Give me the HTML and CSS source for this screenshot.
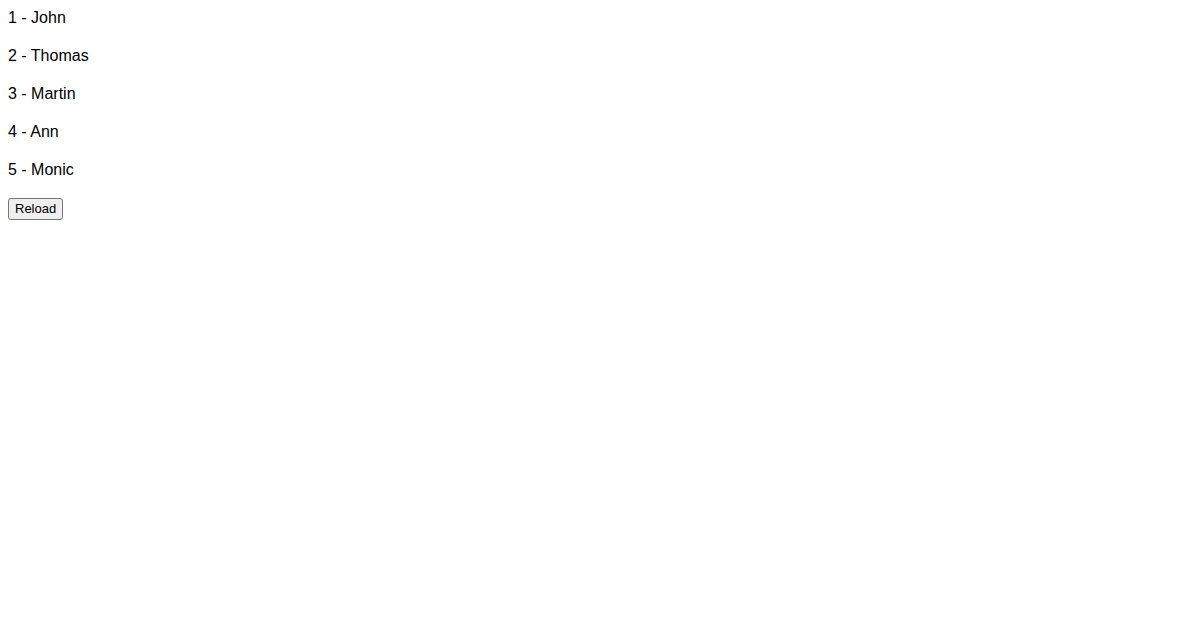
FILE: index.html
```html
<!DOCTYPE html>
<html lang="en">
<head>
  <meta charset="UTF-8">
  <title>Users</title>
  <link rel="stylesheet" href="styles.css">
</head>
<body>
  <div class="users">
    <p class="user">1 - John</p>
    <p class="user">2 - Thomas</p>
    <p class="user">3 - Martin</p>
    <p class="user">4 - Ann</p>
    <p class="user">5 - Monic</p>
  </div>
  <button type="button" class="reload">Reload</button>

  <script>
  document.querySelector('.reload').addEventListener('click', function() {
    location.reload();
  });
  </script>
</body>
</html>
```

FILE: styles.css
```css
body {
  font-family: Helvetica, "Liberation Sans", Arial, sans-serif;
  font-size: 16px;
  margin: 8px;
  background: white;
  color: black;
}
.user {
  margin: 0 0 18px;
  line-height: 20px;
}
.reload {
  font-family: Helvetica, "Liberation Sans", Arial, sans-serif;
  font-size: 13px;
  line-height: 16px;
  padding: 2px 6px;
  border: 1px solid #767676;
  border-radius: 3px;
  background: #efefef;
  color: black;
}
.reload:hover {
  background: #e5e5e5;
}
```
